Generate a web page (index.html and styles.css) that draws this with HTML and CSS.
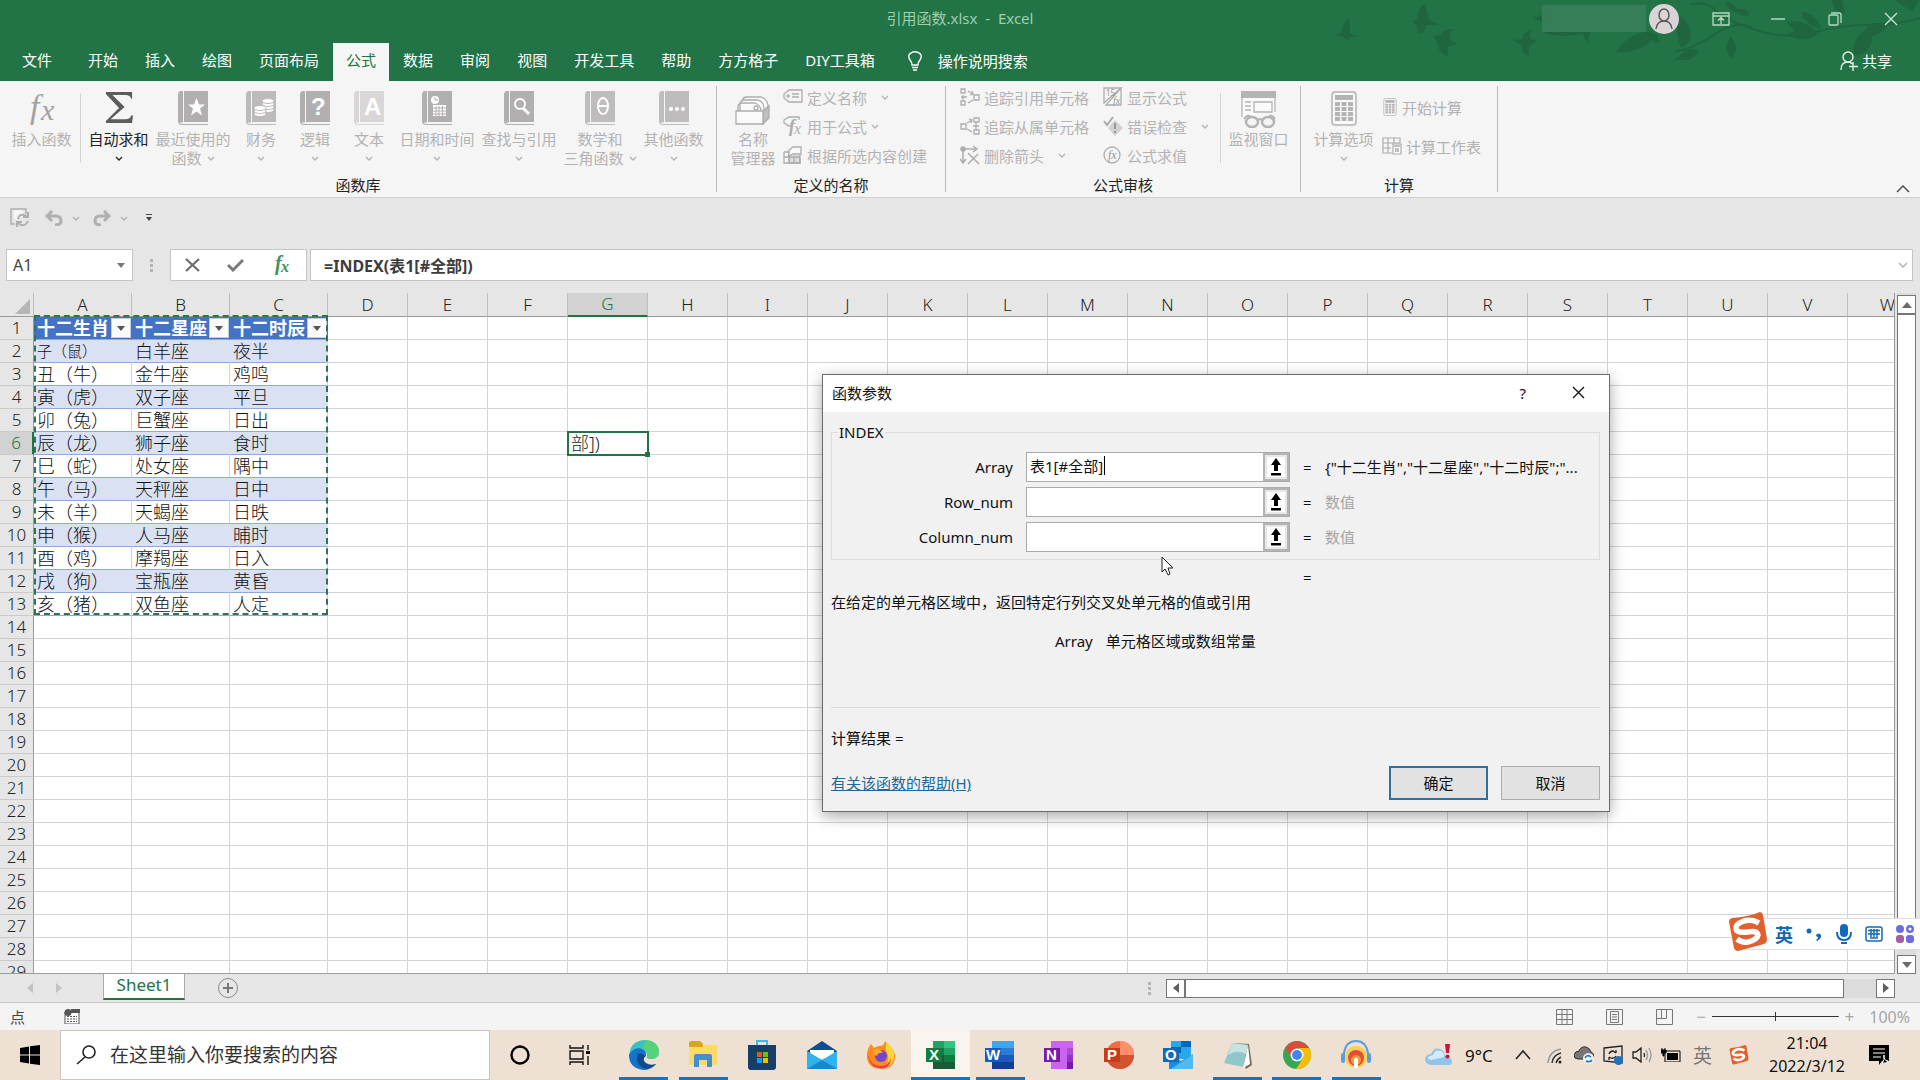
FILE: index.html
```html
<!DOCTYPE html>
<html lang="zh-CN">
<head>
    <meta charset="UTF-8">
    <title>引用函数.xlsx - Excel</title>
    <link rel="stylesheet" href="styles.css">
</head>
<body>
    <!-- shared symbols -->
    <svg class="defs" width="0" height="0">
        <symbol id="book" viewBox="0 0 30 34">
            <path d="M5 0H3Q0 0 0 4V30Q0 34 4 34H30V33H4Q2 33 2 31.500H5Z"/>
            <path d="M6 0H30V31H6Z"/>
        </symbol>
        <symbol id="chev" viewBox="0 0 8 5"><path d="M1 1l3 3 3-3" fill="none" stroke="currentColor" stroke-width="1.300"/></symbol>
        <symbol id="calc" viewBox="0 0 26 35">
            <rect x="1" y="1" width="24" height="33" rx="3" fill="#fafafa" stroke="currentColor" stroke-width="1.500"/>
            <path d="M4 4h18v5H4zM4 11h5v4H4zM10.500 11h5v4h-5zM17 11h5v4h-5zM4 16h5v4H4zM10.500 16h5v4h-5zM17 16h5v4h-5zM4 21h5v4H4zM10.500 21h5v4h-5zM17 21h5v4h-5zM4 26h5v4H4zM10.500 26h5v4h-5zM17 26h5v4h-5z" fill="currentColor"/>
        </symbol>
        <symbol id="sogou" viewBox="0 0 40 40">
            <path d="M4 6Q20 5 32 0Q34 0 35 3L39 27Q39 31 36 32L10 39Q7 39 6 36L1 10Q1 7 4 6Z" fill="#e3602c"/>
            <path d="M31 11Q24 7 16 9Q7 12 8 17Q9 21 19 20Q29 18 30 23Q29 28 20 30Q14 31 9 27" fill="none" stroke="#fff" stroke-width="5.500"/>
        </symbol>
        <symbol id="pick" viewBox="0 0 12 18"><path d="M6 0l5 7H8v6H4V7H1zM1 15h10v2.500H1z"/></symbol>
    </svg>

    <header class="top">
        <svg class="decor" viewBox="0 0 600 60" width="600" height="60">
            <g fill="#1f653e">
                <path d="M30 17q-9 8-8 15l-6 3 8 2q2 3 5 2l1-2 7 0-7-4q-1-9 0-16zM104 4q-8 7-6 15l-6 3 5 3 1 8 6-1 3-7 12 0-11-6q0-8-4-15zM134 29q-10-1-14 6l-6 1 4 8q1 10 10 12l0-9 10-3-8-4q-1-8 4-11zM211 30q-9 2-8 9l-10 1 8 5q0 8 8 11l0-10 8-5-7-2q-1-6 1-9z"/>
                <path d="M213 18l15-5v11zM224 32h46l-2 11-6-9-18 2-18-2zM337 36q-6-7-21-2-14 7-20 18 21 2 35-11zM379 51q-7-4-14 0l-12 10h5q15 1 21-10zM358 15q16 9 12 24-3 7-9 8-6-16-3-32zM330 35l5 8 5 0-4-10zM405 1q11 2 13 12-10-1-13-12zM415 9q15-1 14 6-9 3-14-6zM411 37q10 12 0 21-9-10 0-21zM466 22q20-4 31 11-11 12-30 2l8-4zM481 12q16 1 20 17-14-2-20-17zM552 37q16-7 16-14h-17l-6 7q-15 10-10 26 17-4 17-19zM512 0h10l3 14-10-4zM574 0h26l-8 11z"/>
            </g>
            <path d="M370 5q15-5 25 5t40 20 60 2 55-7 50-7M355 52q20-4 40-18t36-7" fill="none" stroke="#1f653e" stroke-width="2"/>
        </svg>
        <div class="titlebar">
            <div></div>
            <div class="title">引用函数.xlsx&nbsp; -&nbsp; Excel</div>
            <div class="win-right">
                <span class="account"></span>
                <span class="avatar"><svg width="20" height="22" viewBox="0 0 20 22" fill="none" stroke="#5d565a" stroke-width="1.500"><ellipse cx="10" cy="7" rx="5" ry="6"/><path d="M2 21q1-8 8-8t8 8"/></svg></span>
                <button class="win-btn" aria-label="功能区显示选项"><svg width="18" height="14" viewBox="0 0 18 14" fill="none" stroke="#b4d9c2" stroke-width="1.300"><path d="M1 1h16v12H1zM1 4h16M9 12V6M6 8.500l3-3 3 3"/></svg></button>
                <button class="win-btn" aria-label="最小化"><svg width="14" height="14" stroke="#b4d9c2" stroke-width="1.500"><path d="M0 7h14"/></svg></button>
                <button class="win-btn" aria-label="还原"><svg width="14" height="14" viewBox="0 0 14 14" fill="none" stroke="#b4d9c2" stroke-width="1.300"><rect x="1" y="3" width="9" height="10" rx="1"/><path d="M3 1h8q2 0 2 2v8"/></svg></button>
                <button class="win-btn" aria-label="关闭"><svg width="14" height="14" stroke="#cbe8d6" stroke-width="1.300"><path d="M1 1l12 12M13 1L1 13"/></svg></button>
            </div>
        </div>
        <nav class="tabs">
            <button class="tab file">文件</button>
            <button class="tab">开始</button>
            <button class="tab">插入</button>
            <button class="tab">绘图</button>
            <button class="tab">页面布局</button>
            <button class="tab active">公式</button>
            <button class="tab">数据</button>
            <button class="tab">审阅</button>
            <button class="tab">视图</button>
            <button class="tab">开发工具</button>
            <button class="tab">帮助</button>
            <button class="tab">方方格子</button>
            <button class="tab">DIY工具箱</button>
            <button class="tab search"><svg width="16" height="20" viewBox="0 0 16 20" fill="none" stroke="#fff" stroke-width="1.400"><path d="M5 14q0-3-2-5-3-5 1-7 4-2.500 8 0 4 2 1 7-2 2-2 5zM5 16.500h6M6 19h4"/></svg>操作说明搜索</button>
            <button class="tab share"><svg width="18" height="20" viewBox="0 0 18 20" fill="none" stroke="#e6f2ea" stroke-width="1.400"><ellipse cx="8" cy="6" rx="5" ry="5"/><path d="M1 19q0-8 7-8 3 0 4 2M13 11v9M9 15.500h9"/></svg>共享</button>
        </nav>
    </header>

    <section class="ribbon">
        <div class="group">
            <div class="group-body first">
                <button class="big w67"><span class="ico"><svg width="36" height="36" fill="#a3a1a2"><text x="6" y="27" font-family="Liberation Serif" font-style="italic" font-size="34">f</text><text x="17" y="29" font-family="Liberation Serif" font-style="italic" font-size="30">x</text></svg></span>插入函数</button>
                <span class="sep"></span>
                <button class="big w67 on"><span class="ico"><svg width="28" height="33" viewBox="0 0 30 33"><path d="M1 0H29V7H28Q27 3 22 3H8L21 16 6 29H22Q27 29 28 25H30L29 33H1V31L15 17 1 2Z" fill="#5d5b5c"/></svg></span>自动求和<span class="l2"><svg class="arr"><use href="#chev"/></svg></span></button>
                <button class="big w82"><span class="ico"><svg width="30" height="34" fill="#b1afb0"><use href="#book"/><path d="M18.500 7l2.500 6.500h6l-5 4 2 7-5.500-4-5.500 4 2-7-5-4h6z" fill="#fff"/></svg></span>最近使用的<span class="l2">函数 <svg class="arr"><use href="#chev"/></svg></span></button>
                <button class="big w54"><span class="ico"><svg width="30" height="34" fill="#bcbabb"><use href="#book"/><g fill="#fff" stroke="#bcbabb"><ellipse cx="22" cy="19" rx="6" ry="2.500"/><ellipse cx="22" cy="16" rx="6" ry="2.500"/><ellipse cx="22" cy="13" rx="6" ry="2.500"/><ellipse cx="22" cy="10" rx="6" ry="2.500"/><ellipse cx="14" cy="23" rx="6" ry="2.500"/><ellipse cx="14" cy="20" rx="6" ry="2.500"/><ellipse cx="14" cy="17" rx="6" ry="2.500"/></g></svg></span>财务<span class="l2"><svg class="arr"><use href="#chev"/></svg></span></button>
                <button class="big w54"><span class="ico"><svg width="30" height="34" fill="#b1afb0"><use href="#book"/><text x="11" y="24" class="glyph">?</text></svg></span>逻辑<span class="l2"><svg class="arr"><use href="#chev"/></svg></span></button>
                <button class="big w54"><span class="ico"><svg width="30" height="34" fill="#d8d6d7"><use href="#book"/><text x="10" y="24" class="glyph">A</text></svg></span>文本<span class="l2"><svg class="arr"><use href="#chev"/></svg></span></button>
                <button class="big w82"><span class="ico"><svg width="30" height="34" fill="#b1afb0"><use href="#book"/><circle cx="13" cy="9" r="4" fill="#fff"/><path d="M13 6v3h3" fill="none" stroke="#aaa"/><path d="M11 14h13v11H11z" fill="#fff"/><path d="M11 17h13M11 20h13M11 23h13M14 15v10M17 15v10M20.500 15v10" stroke="#b1afb0"/></svg></span>日期和时间<span class="l2"><svg class="arr"><use href="#chev"/></svg></span></button>
                <button class="big w82"><span class="ico"><svg width="30" height="34" fill="#b1afb0"><use href="#book"/><circle cx="16" cy="13" r="5" fill="none" stroke="#fff" stroke-width="2"/><path d="M19 17l6 6" stroke="#fff" stroke-width="3"/></svg></span>查找与引用<span class="l2"><svg class="arr"><use href="#chev"/></svg></span></button>
                <button class="big w80"><span class="ico"><svg width="30" height="34" fill="#bebcbd"><use href="#book"/><ellipse cx="18" cy="15" rx="5" ry="8" fill="none" stroke="#fff" stroke-width="2"/><path d="M13 15h10" stroke="#fff" stroke-width="2"/></svg></span>数学和<span class="l2">三角函数 <svg class="arr"><use href="#chev"/></svg></span></button>
                <button class="big w67"><span class="ico"><svg width="30" height="34" fill="#bebcbd"><use href="#book"/><g fill="#fff"><circle cx="12" cy="18" r="2"/><circle cx="18" cy="18" r="2"/><circle cx="24" cy="18" r="2"/></g></svg></span>其他函数<span class="l2"><svg class="arr"><use href="#chev"/></svg></span></button>
            </div>
            <div class="group-label">函数库</div>
        </div>

        <div class="group">
            <div class="group-body names">
                <button class="big w54"><span class="ico"><svg width="36" height="30" viewBox="0 0 36 30" fill="#fafafa" stroke="#aeacad" stroke-width="1.300"><path d="M7 15V5q1-4 5-4h14q6 2 7 8v8H7z"/><path d="M5 15V7q1-3 5-3h13q6 2 6 8v5M3 15V10q1-3 5-3h12q5 2 6 7v3"/><circle cx="21" cy="12" r="2"/><path d="M28 15l6-5v12l-6 6z" fill="#c0bebf"/><path d="M1 15h27v13H1z"/></svg></span>名称<span class="l2">管理器</span></button>
                <div class="stack">
                    <button class="small"><svg width="20" height="16" viewBox="0 0 20 16" fill="none" stroke="#aeacad" stroke-width="1.300"><path d="M6 1h13v12H6L1 9V5z"/><circle cx="5" cy="7" r="1"/><path d="M9 5h7M9 8h7"/></svg>定义名称<svg class="arr far"><use href="#chev"/></svg></button>
                    <button class="small"><svg width="20" height="20" viewBox="0 0 20 20" fill="#aeacad"><path d="M8 10H6L1 7V4l5-3h10v3" fill="none" stroke="#aeacad" stroke-width="1.300"/><text x="6" y="16" font-family="Liberation Serif" font-style="italic" font-size="18" font-weight="bold">f</text><text x="11" y="18" font-family="Liberation Serif" font-style="italic" font-size="16">x</text></svg>用于公式<svg class="arr"><use href="#chev"/></svg></button>
                    <button class="small"><svg width="20" height="18" viewBox="0 0 20 18" fill="none" stroke="#aeacad" stroke-width="1.300"><path d="M1 6h5v11h11V9" fill="#ddd"/><path d="M1 6v11h16v-5M1 11h16M6 6v11M11 11v6"/><path d="M10 1h8v7h-8l-4 2V4z" fill="#fafafa"/></svg>根据所选内容创建</button>
                </div>
            </div>
            <div class="group-label">定义的名称</div>
        </div>

        <div class="group">
            <div class="group-body audit">
                <div class="stack trace">
                    <button class="small"><svg width="20" height="18" viewBox="0 0 20 18" fill="none" stroke="#aeacad" stroke-width="1.300"><path d="M1 1h4v4H1zM1 13h4v4H1zM14 7h5v5h-5zM8 3l5 3M10 7l3-1-1-3M8 15l5-3M3 7v5M1 9h6"/></svg>追踪引用单元格</button>
                    <button class="small"><svg width="20" height="18" viewBox="0 0 20 18" fill="none" stroke="#aeacad" stroke-width="1.300"><path d="M14 1h5v4h-5zM14 13h5v4h-5zM1 7h5v5H1zM7 6l5-3M9 2l3 1-1 3M7 12l5 3M16 6v6M13 9h6"/></svg>追踪从属单元格</button>
                    <button class="small"><svg width="20" height="20" viewBox="0 0 20 20" fill="none" stroke="#aeacad" stroke-width="1.500"><circle cx="3" cy="4" r="2" fill="#aeacad"/><path d="M3 4h13M13 1l4 3-4 3M3 4v13M0 14l3 4 3-4M8 8l11 11M18 9L8 19"/></svg>删除箭头<svg class="arr far"><use href="#chev"/></svg></button>
                </div>
                <div class="stack check">
                    <button class="small"><svg width="20" height="20" viewBox="0 0 20 20" fill="none" stroke="#aeacad" stroke-width="1.300"><path d="M1 1h17L1 16zM18 1v17H3z"/><text x="3" y="9" font-family="Noto Sans" font-size="8" fill="#999" stroke="none">15</text><text x="10" y="17" font-family="Liberation Serif" font-style="italic" font-size="10" fill="#999" stroke="none">fx</text></svg>显示公式</button>
                    <button class="small"><svg width="20" height="20" viewBox="0 0 20 20"><path d="M12 4l8 8-8 8-7-8z" fill="#d3d1d2"/><path d="M12 7v6M12 15v2" stroke="#999" stroke-width="2"/><path d="M1 5l3 4 6-8" fill="none" stroke="#aaa8a9" stroke-width="2"/></svg>错误检查<svg class="arr far"><use href="#chev"/></svg></button>
                    <button class="small"><svg width="20" height="18" viewBox="0 0 20 18"><ellipse cx="9" cy="9" rx="8" ry="8" fill="none" stroke="#aeacad" stroke-width="1.300"/><text x="5" y="13" font-family="Liberation Serif" font-style="italic" font-size="12" fill="#999">fx</text></svg>公式求值</button>
                </div>
                <span class="sep"></span>
                <button class="big w67"><span class="ico"><svg width="38" height="37" viewBox="0 0 38 37" fill="none" stroke="#b5b3b4" stroke-width="1.300"><path d="M2 26V1h33v20" fill="#fafafa"/><path d="M1 0h35v7H1z" fill="#b5b3b4" stroke="none"/><path d="M5 11h6M5 15h6M5 19h6M14 11h18v10H14z"/><path d="M4 28q3-5 7-2M35 28q-3-5-6-2" stroke-width="2"/><ellipse cx="12" cy="31" rx="6" ry="5" stroke-width="2.500"/><ellipse cx="28" cy="31" rx="6" ry="5" stroke-width="2.500"/><path d="M18 29q2-2 4 0" stroke-width="2"/></svg></span>监视窗口</button>
            </div>
            <div class="group-label">公式审核</div>
        </div>

        <div class="group">
            <div class="group-body calculate">
                <button class="big w67"><span class="ico"><svg width="26" height="35"><use href="#calc"/></svg></span>计算选项<span class="l2"><svg class="arr"><use href="#chev"/></svg></span></button>
                <div class="stack loose">
                    <button class="small"><svg width="16" height="18"><use href="#calc"/></svg>开始计算</button>
                    <button class="small"><svg width="20" height="18" viewBox="0 0 20 18" fill="none" stroke="#aeacad" stroke-width="1.200"><path d="M10 16H1V1h17v5M1 6h17M1 11h8M6 1v15M12 1v5"/><path d="M11 7h8v10h-8z" fill="#fafafa"/><path d="M12 9h6M13 12h4M13 14h4" stroke-width="1.500"/></svg>计算工作表</button>
                </div>
            </div>
            <div class="group-label">计算</div>
        </div>
        <button class="collapse" aria-label="折叠功能区"><svg width="14" height="8" fill="none" stroke="#444" stroke-width="1.400"><path d="M1 7l6-6 6 6"/></svg></button>
    </section>

    <div class="qat">
        <button aria-label="保存"><svg width="20" height="20" viewBox="0 0 20 20" fill="none" stroke="#b0b0b0" stroke-width="1.500"><path d="M5 16H1V1h15v5"/><path d="M4 2h9v6l-6 3H4z" fill="#f6f6f6" stroke="none"/><path d="M8 11q1-5 6-4l4 2M18 4v5h-5M18 13q-2 5-7 4l-3-2M7 19v-5h5" stroke-width="2"/></svg></button>
        <button class="undo" aria-label="撤消"><svg width="18" height="16" viewBox="0 0 18 16" fill="none" stroke="#b0b0b0" stroke-width="3"><path d="M7 1L2 6l5 5M2 6h9q5 0 5 5 0 4-6 4"/></svg></button>
        <svg class="arr"><use href="#chev"/></svg>
        <button class="redo" aria-label="恢复"><svg width="18" height="16" viewBox="0 0 18 16" fill="none" stroke="#b0b0b0" stroke-width="3"><path d="M11 1l5 5-5 5M16 6H7q-5 0-5 5 0 4 6 4"/></svg></button>
        <svg class="arr"><use href="#chev"/></svg>
        <button class="custom" aria-label="自定义快速访问工具栏"><svg width="6" height="8" fill="#444"><path d="M0 0h6v1H0zM0 3h6L3 7z"/></svg></button>
    </div>

    <div class="formula-row">
        <div class="name-box"><input type="text" value="A1" aria-label="名称框"><button aria-label="名称列表"><svg width="8" height="5" fill="#777"><path d="M0 0h8L4 5z"/></svg></button></div>
        <span class="dots"></span>
        <div class="fx-box">
            <button aria-label="取消"><svg width="15" height="14" stroke="#6b6b6b" stroke-width="2.200"><path d="M1 1l13 12M14 1L1 13"/></svg></button>
            <button aria-label="输入"><svg width="17" height="14" fill="none" stroke="#7b7b7b" stroke-width="3"><path d="M1 7l5 5L16 2"/></svg></button>
            <button aria-label="插入函数"><svg width="20" height="22" fill="#3f9160"><text x="3" y="16" font-family="Liberation Serif" font-style="italic" font-weight="bold" font-size="20">f</text><text x="9" y="18" font-family="Liberation Serif" font-style="italic" font-weight="bold" font-size="16">x</text></svg></button>
        </div>
        <div class="formula-box"><input type="text" value="=INDEX(表1[#全部])" aria-label="编辑栏"><svg width="10" height="6" fill="none" stroke="#b5b5b5" stroke-width="1.500"><path d="M1 1l4 4 4-4"/></svg></div>
    </div>

    <main class="workspace">
        <div class="sheet">
            <table id="grid"></table>
            <div class="ants"></div>
        </div>
        <div class="vscroll">
            <button aria-label="向上"><svg width="10" height="6" fill="#6b6b6b"><path d="M0 6h10L5 0z"/></svg></button>
            <div class="vthumb"></div>
            <button aria-label="向下"><svg width="10" height="6" fill="#6b6b6b"><path d="M0 0h10L5 6z"/></svg></button>
        </div>
    </main>

    <div class="sheetbar">
        <button class="nav" aria-label="上一张"><svg width="6" height="10" fill="#c2c2c2"><path d="M6 0v10L0 5z"/></svg></button>
        <button class="nav" aria-label="下一张"><svg width="6" height="10" fill="#c2c2c2"><path d="M0 0v10l6-5z"/></svg></button>
        <button class="sheet-tab">Sheet1</button>
        <button class="add" aria-label="新工作表"><svg width="22" height="22" fill="none" stroke="#8a8a8a"><circle cx="11" cy="11" r="9.500"/><path d="M6 11h10M11 6v10" stroke="#777" stroke-width="2"/></svg></button>
        <span class="dots"></span>
        <div class="hscroll">
            <button aria-label="向左"><svg width="6" height="10" fill="#5f5f5f"><path d="M6 0v10L0 5z"/></svg></button>
            <div class="hthumb"></div>
            <button aria-label="向右"><svg width="6" height="10" fill="#5f5f5f"><path d="M0 0v10l6-5z"/></svg></button>
        </div>
    </div>

    <footer class="status">
        <span class="mode">点</span>
        <svg width="16" height="15" viewBox="0 0 16 15"><path d="M1 3h14v12H1z" fill="#fff" stroke="#555"/><path d="M7 0h9v4H7z" fill="#555"/><circle cx="4" cy="3.500" r="3.500" fill="#555"/><path d="M3 7.500h10M3 10h10M3 12.500h10" stroke="#555" stroke-dasharray="2 1"/></svg>
        <div class="views">
            <button aria-label="普通"><svg width="17" height="16" fill="none" stroke="#777"><path d="M.5.5h16v15H.5zM.5 5.500h16M.5 10.500h16M6 .5v15M11 .5v15"/></svg></button>
            <button aria-label="页面布局"><svg width="17" height="16" fill="none" stroke="#777"><path d="M.5.5h16v15H.5zM4.500 2.500h8v11h-8zM6 5.500h5M6 8h5M6 10.500h5"/></svg></button>
            <button aria-label="分页预览"><svg width="17" height="16" fill="none" stroke="#777"><path d="M.5.5h16v15H.5zM.5 9.500h10v-9M5.500.5v9"/></svg></button>
        </div>
        <div class="zoom">
            <button aria-label="缩小">−</button>
            <input type="range" min="10" max="190" value="100" aria-label="显示比例">
            <button aria-label="放大">+</button>
        </div>
        <span class="percent">100%</span>
    </footer>

    <div class="taskbar">
        <button class="start" aria-label="开始"><svg width="20" height="20" viewBox="0 0 20 20"><path d="M0 3l9-1.500V9.500H0zM10 1.300L20 0v9.500H10zM0 10.500h9v8L0 17zM10 10.500h10V20l-10-1.300z"/></svg></button>
        <label class="search-box"><svg width="20" height="20" fill="none" stroke="#222" stroke-width="1.600"><circle cx="13" cy="7" r="6"/><path d="M9 12L1 19"/></svg><input type="text" placeholder="在这里输入你要搜索的内容"></label>
        <button class="sys" aria-label="Cortana"><svg width="20" height="20" fill="none" stroke="#000" stroke-width="2.400"><circle cx="10" cy="10" r="8.500"/></svg></button>
        <button class="sys" aria-label="任务视图"><svg width="22" height="20" viewBox="0 0 22 20" fill="none" stroke="#111" stroke-width="1.400"><path d="M1 0v3h13V0M1 6h13v8H1zM1 20v-3h13v3M19 0v5M19 11v9"/><path d="M17 6h4v3h-4z" fill="#111" stroke="none"/></svg></button>
        <div class="apps">
            <button class="app run" aria-label="Edge"><svg width="32" height="30" viewBox="0 0 32 30"><path d="M1 16Q2 1 16 0q13 0 15 11 0 8-8 8-5 0-4-3 1-5-5-6-8-1-13 6z" fill="#36c2c0"/><path d="M18 0q13 2 13 12 0 7-8 7-5 0-4-3 2-6-5-7z" fill="#54d37a"/><path d="M1 15q5-9 13-6 5 2 4 7-5 3-1 8 5 3 11 0-5 6-13 6Q1 28 1 15z" fill="#1572c9"/><path d="M10 14q-4 11 8 15 7-1 10-5-6 2-10-1t-1-7q-4-4-7-2z" fill="#114a8b"/></svg></button>
            <button class="app run" aria-label="文件资源管理器"><svg width="28" height="28" viewBox="0 0 28 28"><path d="M0 2q0-2 2-2h9l3 3v4H0z" fill="#d9a321"/><path d="M0 6h13l2-2h13v20H0z" fill="#fbd96b"/><path d="M5 26V15q0-2 2-2h14q2 0 2 2v11h-5v-7h-8v7z" fill="#3f92cf"/></svg></button>
            <button class="app" aria-label="商店"><svg width="30" height="30" viewBox="0 0 30 30"><path d="M10 6V1h10v5" fill="none" stroke="#41b9e8" stroke-width="2"/><path d="M1 5h28v22q0 3-3 3H4q-3 0-3-3z" fill="#173e68"/><path d="M10 12h5v5h-5z" fill="#f25022"/><path d="M16 12h5v5h-5z" fill="#7fba00"/><path d="M10 18h5v5h-5z" fill="#00a4ef"/><path d="M16 18h5v5h-5z" fill="#ffb900"/></svg></button>
            <button class="app" aria-label="邮件"><svg width="30" height="28" viewBox="0 0 30 28"><path d="M0 10L15 0l15 10v6H0z" fill="#114e8c"/><path d="M3 9h24v8H3z" fill="#fff"/><path d="M0 10l15 9 15-9v18H0z" fill="#2fb3ec"/><path d="M0 28l15-9 15 9z" fill="#1688d0"/></svg></button>
            <button class="app" aria-label="Firefox"><svg width="28" height="28" viewBox="0 0 28 28"><path d="M18 0q3 4 6 6 5 6 4 12-2 10-14 10T0 17Q-1 9 4 3l3 4q3-2 6-2 4 0 5-5z" fill="#ff8a1e"/><path d="M19 1q9 6 8 15-1 9-9 10 6-9 1-16z" fill="#ffd43a"/><path d="M1 12q2 14 14 13 7-1 9-8 0 9-8 10Q2 28 1 12z" fill="#f0344e"/><circle cx="14" cy="15" r="6" fill="#7544cf"/><path d="M6 9q6-3 10 3-5-1-6 3-4-2-4-6z" fill="#ffab2e"/></svg></button>
            <button class="app run active" aria-label="Excel"><svg width="30" height="28" viewBox="0 0 30 28"><path d="M7 0h22v28H7z" fill="#21a366"/><path d="M18 0h11v7H18z" fill="#33c481"/><path d="M7 7h11v7H7zM18 14h11v7H18z" fill="#107c41"/><path d="M7 14h11v7H7zM7 21h22v7H7z" fill="#185c37"/><path d="M0 7h16v14H0z" fill="#107c41"/><text x="3" y="19" class="logo">X</text></svg></button>
            <button class="app run" aria-label="Word"><svg width="30" height="28" viewBox="0 0 30 28"><path d="M7 0h22v7H7z" fill="#41a5ee"/><path d="M7 7h22v7H7z" fill="#2b7cd3"/><path d="M7 14h22v7H7z" fill="#185abd"/><path d="M7 21h22v7H7z" fill="#103f91"/><path d="M0 7h16v14H0z" fill="#185abd"/><text x="1" y="19" class="logo">W</text></svg></button>
            <button class="app" aria-label="OneNote"><svg width="30" height="28" viewBox="0 0 30 28"><path d="M7 0h22v28H7z" fill="#ca64ea"/><path d="M23 7h6v7h-6z" fill="#ae4bd5"/><path d="M23 14h6v7h-6z" fill="#9332bf"/><path d="M23 21h6v7h-6z" fill="#7719aa"/><path d="M0 7h16v14H0z" fill="#7719aa"/><text x="2" y="19" class="logo">N</text></svg></button>
            <button class="app" aria-label="PowerPoint"><svg width="30" height="28" viewBox="0 0 30 28"><circle cx="16" cy="14" r="14" fill="#ed6c47"/><path d="M16 0a14 14 0 0 1 14 14H16z" fill="#ff8f6b"/><path d="M2 14h28a14 14 0 0 1-28 0z" fill="#d35230"/><path d="M0 7h16v14H0z" fill="#c43e1c"/><text x="3" y="19" class="logo">P</text></svg></button>
            <button class="app" aria-label="Outlook"><svg width="30" height="28" viewBox="0 0 30 28"><path d="M8 0h20v18H8z" fill="#28a8ea"/><path d="M18 0h10v6H18zM8 6h10v6H8z" fill="#0364b8"/><path d="M6 13l12 7 12-7v15H6z" fill="#1490df"/><path d="M30 13L8 28h22z" fill="#50b9ee"/><path d="M0 7h16v14H0z" fill="#0f6cbd"/><text x="2" y="19" class="logo">O</text></svg></button>
            <button class="app run" aria-label="记事本"><svg width="28" height="28" viewBox="0 0 28 28"><path d="M8 2l17 1 3 21-6 4z" fill="#776d55"/><path d="M24 4l2 19-7 4z" fill="#fff"/><path d="M8 2l16 2-5 22L0 22z" fill="#8fc8cb"/><path d="M8 2l16 2-2 9Q13 8 4 14z" fill="#c5e3e1"/></svg></button>
            <button class="app run" aria-label="Chrome"><svg width="28" height="28" viewBox="0 0 28 28"><circle cx="14" cy="14" r="14" fill="#34a853"/><path d="M26 7a14 14 0 0 1-13 21l7-11-4-10z" fill="#fbbc05"/><path d="M2 7q12-14 24 0H14l-6 8z" fill="#dd4a3d"/><circle cx="14" cy="14" r="6.500" fill="#fff"/><circle cx="14" cy="14" r="5" fill="#4285f4"/></svg></button>
            <button class="app run" aria-label="音乐"><svg width="30" height="30" viewBox="0 0 30 30"><path d="M3 17V13Q5 1 15 1t12 12v4" fill="none" stroke="#5b9de0" stroke-width="2"/><rect x="0" y="13" width="4" height="10" rx="2" fill="#5b9de0"/><rect x="26" y="13" width="4" height="10" rx="2" fill="#5b9de0"/><circle cx="15" cy="17" r="11" fill="#fbd04e"/><circle cx="15" cy="18" r="8" fill="#e44b3a"/><circle cx="15" cy="20" r="5" fill="#f59a3c"/><path d="M13 19q2-3 4 0v9h-4z" fill="#fff"/></svg></button>
        </div>
        <div class="tray">
            <svg width="28" height="22" viewBox="0 0 28 22"><path d="M6 21q-6-1-6-6 1-5 6-5 3-7 9-5 5 2 5 7 7 1 7 6 0 3-3 3z" fill="#8fc5ea"/><path d="M6 16q-4-1-3-3l5-2q2-6 8-4 4 2 3 6z" fill="#d5eafa"/><path d="M20 0h5l-1 9h-3z" fill="#c4163a"/><circle cx="22.500" cy="12.500" r="2" fill="#c4163a"/></svg>
            <span class="temp">9°C</span>
            <svg class="up" width="16" height="10" fill="none" stroke="#222" stroke-width="1.600"><path d="M1 9l7-8 7 8"/></svg>
            <svg class="t" width="18" height="18" fill="none" stroke="#333" stroke-width="1.500"><path d="M3 17Q4 5 16 3" stroke="#999"/><path d="M7 17q1-8 9-10M11 17q1-4 5-6"/><circle cx="15" cy="16" r="1.500" fill="#222" stroke="none"/></svg>
            <svg class="t" width="20" height="18" viewBox="0 0 20 18"><path d="M4 13q-4 0-4-4 1-4 5-4 2-5 7-4 4 1 5 5 3 1 3 5l-3 2z" fill="#777" stroke="#333"/><circle cx="14.500" cy="12.500" r="5.500" fill="#eaf3fa"/><path d="M11 12q2-4 6-1M18 14q-2 3-6 1" fill="none" stroke="#2d6da3" stroke-width="1.500"/></svg>
            <svg class="t" width="20" height="20" viewBox="0 0 20 20" fill="none" stroke="#222" stroke-width="1.300"><path d="M1 3l18-2v17L1 16z"/><path d="M6 9q1-3 4-3l3 2M13 5v3M13 11q-2 3-5 2l-2-1M6 15v-3"/><circle cx="15.500" cy="15.500" r="4.500" fill="#2272b9" stroke="none"/></svg>
            <svg class="t" width="20" height="16" viewBox="0 0 20 16" fill="none" stroke="#222" stroke-width="1.300"><path d="M1 5h3l5-4v14l-5-4H1zM12 6q1 2 0 4"/><path d="M14 3q3 5 0 10M17 1q4 7 0 14" stroke="#999"/></svg>
            <svg class="t" width="20" height="14" viewBox="0 0 20 14"><path d="M4 3h15v11H4z" fill="none" stroke="#000"/><path d="M6 5h11v7H6z"/><path d="M0 2h5v3H3v3H2V5H0zM1 0v3M4 0v3" stroke="#000"/></svg>
            <span class="ime">英</span>
            <svg width="20" height="20"><use href="#sogou"/></svg>
            <div class="clock">21:04<br>2022/3/12</div>
            <svg width="20" height="20" viewBox="0 0 20 20"><path d="M0 0h20v16h-7l-3 4v-4H0z"/><path d="M4 4h12M4 8h12M4 12h8" stroke="#fff"/><path d="M15 10q-1 5 4 6-2 3-6 2 3-3 2-8z" stroke="#fff"/></svg>
        </div>
    </div>

    <!-- function arguments dialog -->
    <div class="dialog" role="dialog" aria-label="函数参数">
        <div class="dialog-title">函数参数
            <button class="help" aria-label="帮助">?</button>
            <button aria-label="关闭"><svg width="13" height="13" stroke="#111" stroke-width="1.300"><path d="M1 1l11 11M12 1L1 12"/></svg></button>
        </div>
        <div class="dialog-body">
            <fieldset>
                <legend>INDEX</legend>
                <div class="arg">
                    <label for="arg-array">Array</label>
                    <div class="field"><input type="text" id="arg-array" value="表1[#全部]"><i class="caret"></i><button aria-label="选择区域"><svg width="12" height="18"><use href="#pick"/></svg></button></div>
                    <span>=</span><span>{"十二生肖","十二星座","十二时辰";"...</span>
                </div>
                <div class="arg">
                    <label for="arg-row">Row_num</label>
                    <div class="field"><input type="text" id="arg-row"><button aria-label="选择区域"><svg width="12" height="18"><use href="#pick"/></svg></button></div>
                    <span>=</span><span class="hint">数值</span>
                </div>
                <div class="arg">
                    <label for="arg-col">Column_num</label>
                    <div class="field"><input type="text" id="arg-col"><button aria-label="选择区域"><svg width="12" height="18"><use href="#pick"/></svg></button></div>
                    <span>=</span><span class="hint">数值</span>
                </div>
            </fieldset>
            <div class="total">=</div>
            <p class="desc">在给定的单元格区域中，返回特定行列交叉处单元格的值或引用</p>
            <p class="arg-desc"><span>Array</span><span>单元格区域或数组常量</span></p>
            <p class="result">计算结果 =</p>
            <div class="dialog-foot">
                <a href="#">有关该函数的帮助(H)</a>
                <button class="ok">确定</button>
                <button>取消</button>
            </div>
        </div>
    </div>

    <svg class="cursor" width="13" height="20" viewBox="0 0 13 20"><path d="M1 1v15l3-3 3 6 2-1-2-6h5z" fill="#fff" stroke="#222"/></svg>

    <div class="ime-bar">
        <svg class="ime-logo" width="40" height="40"><use href="#sogou"/></svg>
        <span>英</span>
        <svg width="16" height="14" fill="#1369b8"><circle cx="3" cy="4" r="2.500"/><path d="M10 8q3-3 5 0 1 3-4 6l-1-1q2-1 2-3-2 0-2-2z"/></svg>
        <svg width="16" height="20" viewBox="0 0 16 20" fill="#1369b8"><rect x="4" y="0" width="8" height="13" rx="4"/><path d="M1 8q0 8 7 8t7-8" fill="none" stroke="#1369b8" stroke-width="2"/><path d="M5 18h6v2H5z"/></svg>
        <svg width="18" height="16" fill="none" stroke="#1369b8" stroke-width="1.500"><rect x="1" y="1" width="16" height="14" rx="2"/><path d="M3 4.500h12M3 8h12M6 3v8M9 3v8M12 3v8M5 12h8"/></svg>
        <svg width="18" height="18"><g fill="#6d6be0"><rect width="8" height="8" rx="4"/><rect x="10" width="8" height="8" rx="4"/><rect x="10" y="10" width="8" height="8" rx="3"/></g><rect y="10" width="8" height="8" rx="3" fill="#a3609f"/><circle cx="14" cy="4" r="1.500" fill="#fff"/></svg>
    </div>

    <script src="grid.js"></script>
</body>
</html>
```
FILE: styles.css
```css
* {
    box-sizing: border-box;
}
body {
    margin: 0;
    height: 100vh;
    display: flex;
    flex-direction: column;
    overflow: hidden;
    background: #e6e6e6;
    color: #222;
    font-family: "Noto Sans", "Noto Sans CJK SC", sans-serif;
    font-size: 15px;
}
button, input {
    font: inherit;
    color: inherit;
    margin: 0;
    padding: 0;
    border: none;
    background: none;
    outline: none;
}
svg {
    display: block;
    flex: none;
}
.defs {
    position: absolute;
}
p {
    margin: 0;
}

/* title bar and tabs */
.top {
    position: relative;
    flex: none;
    background: #227447;
}
.decor {
    position: absolute;
    right: 0;
    top: 0;
}
.titlebar {
    position: relative;
    height: 43px;
    display: grid;
    grid-template-columns: 1fr auto 1fr;
}
.title {
    line-height: 36px;
    color: #9dcfb0;
}
.win-right {
    display: flex;
    justify-content: flex-end;
    align-items: center;
    height: 37px;
}
.account {
    width: 104px;
    height: 27px;
    margin-right: 3px;
    background: #37805a;
    opacity: 0.9;
}
.avatar {
    width: 30px;
    height: 30px;
    margin-right: 13px;
    border-radius: 50%;
    background: #d9d5d6;
    display: flex;
    align-items: center;
    justify-content: center;
}
.win-btn {
    width: 57px;
    display: flex;
    justify-content: center;
}
.win-btn:last-child {
    padding-right: 2px;
}
.tabs {
    position: relative;
    display: flex;
    gap: 1px;
    height: 38px;
    padding-left: 9px;
}
.tab {
    padding: 0 13px 4px;
    color: #fff;
    line-height: 20px;
}
.tab.file {
    margin-right: 9px;
}
.tab.active {
    background: #f5f5f5;
    color: #227447;
}
.tab.search, .tab.share {
    display: flex;
    align-items: center;
    gap: 15px;
    padding: 0 13px 2px 18px;
}
.tab.share {
    margin-left: auto;
    gap: 4px;
    padding-right: 28px;
}

/* ribbon */
.ribbon {
    position: relative;
    flex: none;
    display: flex;
    height: 117px;
    padding: 5px 0;
    background: #f5f5f5;
    border-bottom: 1px solid #d0d0d0;
    color: #b4b2b3;
}
.group {
    display: flex;
    flex-direction: column;
    border-right: 1px solid #b9b9b9;
}
.group-body {
    flex: 1;
    display: flex;
}
.group-body.first {
    padding: 0 9px 0 8px;
}
.group-body.names {
    gap: 3px;
    padding: 0 18px 0 9px;
}
.group-body.audit {
    padding: 0 8px 0 14px;
}
.group-body.calculate {
    padding: 0 16px 0 9px;
}
.group-label {
    text-align: center;
    line-height: 14px;
    color: #222;
}
.big {
    display: flex;
    flex-direction: column;
    align-items: center;
    height: 84px;
    padding-top: 5px;
    line-height: 19px;
    white-space: nowrap;
}
.big.on {
    color: #222;
}
.ico {
    height: 39px;
}
.names .ico {
    padding-top: 5px;
}
.l2 {
    display: flex;
    align-items: center;
    gap: 5px;
    height: 19px;
}
.w54 { width: 54px; }
.w67 { width: 67px; }
.w80 { width: 80px; }
.w82 { width: 82px; }
.glyph {
    font: bold 24px "Liberation Sans", sans-serif;
    fill: #fff;
}
.arr {
    width: 8px;
    height: 5px;
}
.sep {
    width: 1px;
    height: 70px;
    margin: 7px 4px 0 5px;
    background: #d4d4d4;
}
.stack {
    display: flex;
    flex-direction: column;
    gap: 5px;
}
.stack.trace {
    width: 143px;
}
.stack.check {
    width: 112px;
}
.stack.loose {
    gap: 15px;
    padding: 10px 0 0 5px;
}
.small {
    display: flex;
    align-items: center;
    gap: 4px;
    height: 24px;
    padding-bottom: 2px;
    white-space: nowrap;
}
.small .far {
    margin-left: 10px;
}
.collapse {
    position: absolute;
    right: 10px;
    bottom: 4px;
}

/* quick access */
.qat {
    flex: none;
    display: flex;
    align-items: center;
    height: 51px;
    padding: 0 0 11px 10px;
    color: #b0b0b0;
}
.qat .undo {
    margin: 0 9px 0 15px;
}
.qat .redo {
    margin: 0 9px 0 13px;
}
.qat .custom {
    margin-left: 18px;
}

/* formula bar */
.formula-row {
    flex: none;
    display: flex;
    align-items: stretch;
    height: 44px;
    padding: 0 7px 12px 6px;
}
.name-box, .fx-box, .formula-box {
    display: flex;
    align-items: center;
    background: #fff;
    border: 1px solid #c6c6c6;
}
.name-box {
    width: 127px;
    padding: 0 7px 0 6px;
    color: #444;
}
.name-box input {
    flex: 1;
    min-width: 0;
    font-size: 16px;
}
.dots {
    width: 3px;
    height: 13px;
    margin: auto 17px;
    background: repeating-linear-gradient(#b4b4b4 0 3px, transparent 3px 5px);
}
.fx-box {
    width: 137px;
    margin-right: 3px;
    justify-content: space-around;
}
.formula-box {
    flex: 1;
    padding: 0 4px 0 13px;
}
.formula-box input {
    flex: 1;
    font-size: 16px;
    font-weight: bold;
    color: #3c3c3c;
}

/* worksheet */
.workspace {
    flex: 1;
    min-height: 0;
    display: flex;
    padding-right: 4px;
}
.sheet {
    position: relative;
    flex: 1;
    overflow: hidden;
    border-right: 1px solid #9a9a9a;
    border-bottom: 1px solid #9aa09a;
}
#grid {
    table-layout: fixed;
    width: 1928px;
    border-spacing: 0;
}
#grid th, #grid td {
    height: 23px;
    padding: 0;
    font-weight: 300;
    font-size: 17px;
    line-height: 22px;
    white-space: nowrap;
}
#grid th {
    background: #e6e6e6;
    color: #222;
    border-right: 1px solid #bdbdbd;
}
#grid thead th {
    border-bottom: 1px solid #9a9a9a;
}
#grid tbody th {
    border-right-color: #9a9a9a;
    border-bottom: 1px solid #cacaca;
}
#grid thead th.sel {
    background: #d2d2d2;
    color: #227447;
    border-bottom: 2px solid #227447;
}
#grid tbody th.sel {
    background: #d2d2d2;
    color: #227447;
    border-right: 2px solid #227447;
}
#grid td {
    background: #fff;
    border-right: 1px solid #d4d4d4;
    border-bottom: 1px solid #d4d4d4;
}
#grid td.data {
    padding-left: 3px;
    font-size: 18px;
    color: #111;
    border-bottom-color: #8ea9db;
}
#grid tr.band td.data {
    background: #d9e1f2;
    border-right-color: #d9e1f2;
}
#grid td.data.typing {
    font-size: 15px;
    vertical-align: top;
}
#grid td.head {
    background: #4472c4;
    border-right-color: #4472c4;
    color: #fff;
    font-weight: bold;
}
.cell-head {
    display: flex;
    justify-content: space-between;
    align-items: center;
}
.filter {
    width: 20px;
    height: 20px;
    display: flex;
    align-items: center;
    justify-content: center;
    background: #fbfbfb;
    border: 1px solid #c3cbdc;
}
#grid td.editing {
    position: relative;
    padding-left: 3px;
    font-size: 18px;
    outline: 2px solid #227447;
    outline-offset: -1px;
}
.editing::after {
    content: "";
    position: absolute;
    right: -3px;
    bottom: -3px;
    width: 5px;
    height: 5px;
    background: #227447;
}
.corner {
    display: block;
    margin: 3px 3px 0 auto;
}
.ants {
    position: absolute;
    left: 34px;
    top: 22px;
    width: 294px;
    height: 300px;
    border: 2px dashed #2f7350;
}

.vscroll {
    width: 19px;
    margin: 0 0 0 2px;
    padding-top: 2px;
    display: flex;
    flex-direction: column;
    background: #dcdcdc;
}
.vscroll button, .hscroll button {
    display: flex;
    align-items: center;
    justify-content: center;
    background: #fff;
    border: 1px solid #777;
}
.vscroll button {
    height: 19px;
}
.vthumb {
    flex: 1;
    margin-bottom: 30px;
    background: #fff;
    border: 1px solid #777;
}

/* sheet tabs */
.sheetbar {
    flex: none;
    display: flex;
    align-items: center;
    height: 29px;
    padding: 0 25px 0 27px;
    border-bottom: 1px solid #c6c6c6;
}
.nav {
    margin-right: 23px;
}
.sheet-tab {
    align-self: flex-start;
    width: 82px;
    height: 26px;
    margin: 0 32px 0 18px;
    padding-bottom: 2px;
    background: #fff;
    border: 1px solid #aaa;
    border-top: none;
    border-bottom: 2px solid #227447;
    color: #227447;
    font-size: 17px;
    line-height: 22px;
}
.sheetbar .dots {
    margin: 0 15px 0 auto;
}
.hscroll {
    width: 729px;
    height: 19px;
    display: flex;
    background: #dcdcdc;
}
.hscroll button {
    width: 19px;
}
.hthumb {
    flex: 1;
    margin-right: 32px;
    background: #fff;
    border: 1px solid #777;
}

/* status bar */
.status {
    flex: none;
    display: flex;
    align-items: center;
    height: 27px;
    padding: 0 10px;
    background: #f4f4f4;
    color: #444;
}
.mode {
    margin-right: 39px;
}
.views {
    display: flex;
    gap: 33px;
    margin-left: auto;
}
.zoom {
    display: flex;
    align-items: center;
    gap: 6px;
    width: 158px;
    margin: 0 15px 0 23px;
    color: #a5a5a5;
    font-size: 17px;
    line-height: 20px;
}
.zoom input {
    flex: 1;
    min-width: 0;
    height: 9px;
    appearance: none;
    background: linear-gradient(#333, #333) center / 100% 1px no-repeat;
}
.zoom input::-webkit-slider-thumb {
    appearance: none;
    width: 1px;
    height: 9px;
    background: #333;
}
.percent {
    color: #a5a5a5;
    font-size: 16px;
}

/* taskbar */
.taskbar {
    flex: none;
    display: flex;
    align-items: center;
    height: 50px;
    background: #eee1d4;
    color: #111;
}
.start {
    width: 60px;
    display: flex;
    justify-content: center;
}
.search-box {
    width: 430px;
    height: 50px;
    display: flex;
    align-items: center;
    gap: 14px;
    padding-left: 15px;
    background: #fff;
    border: 1px solid #ccc4bc;
}
.search-box input {
    flex: 1;
    font-size: 19px;
}
.search-box input::placeholder {
    color: #333;
}
.sys {
    width: 60px;
    display: flex;
    justify-content: center;
}
.apps {
    flex: 1;
    display: flex;
    height: 50px;
    margin: 0 29px 0 4px;
}
.app {
    flex: 1;
    display: flex;
    align-items: center;
    justify-content: center;
}
.app.run {
    background: linear-gradient(#1873bd, #1873bd) center bottom / 49px 3px no-repeat;
}
.app.run.active {
    background: linear-gradient(#1873bd, #1873bd) center bottom / 100% 3px no-repeat #f9f5ee;
}
.logo {
    font: bold 15px "Liberation Sans", sans-serif;
    fill: #fff;
}
.tray {
    display: flex;
    align-items: center;
    width: 505px;
    padding-left: 10px;
}
.temp {
    width: 59px;
    padding-left: 12px;
    font-size: 17px;
}
.tray .up {
    margin: 0 14px 0 3px;
}
.tray .t {
    width: 20px;
    margin-right: 9px;
}
.ime {
    margin: 0 17px 0 3px;
    font-size: 19px;
    color: #777;
}
.clock {
    width: 88px;
    margin: 0 18px 0 14px;
    text-align: center;
    font-size: 16px;
    line-height: 23px;
}

/* dialog */
.dialog {
    position: absolute;
    left: 822px;
    top: 374px;
    width: 788px;
    height: 438px;
    display: flex;
    flex-direction: column;
    background: #f1f1f1;
    border: 1px solid #6b6b6b;
    box-shadow: 0 4px 14px rgba(0,0,0,0.35);
    color: #111;
    line-height: 20px;
}
.dialog-title {
    display: flex;
    align-items: center;
    height: 37px;
    padding: 0 24px 2px 9px;
    background: #fff;
}
.dialog-title .help {
    margin: 0 46px 0 auto;
}
.dialog-body {
    flex: 1;
    display: flex;
    flex-direction: column;
    padding: 10px 9px 11px 8px;
}
fieldset {
    margin: 0;
    padding: 10px 0 7px;
    border: 1px solid #dcdcdc;
    display: flex;
    flex-direction: column;
    gap: 5px;
}
legend {
    margin-left: 6px;
    padding: 0 1px;
}
.arg {
    display: grid;
    grid-template-columns: 181px 264px 9px 1fr;
    align-items: center;
    column-gap: 13px;
}
.arg label {
    text-align: right;
}
.field {
    position: relative;
    display: flex;
    height: 30px;
    background: #fff;
    border: 1px solid #ababab;
}
.field input {
    flex: 1;
    min-width: 0;
    padding: 0 0 3px 3px;
}
.field button {
    width: 26px;
    display: flex;
    align-items: center;
    justify-content: center;
    background: #fff;
    border: 2px solid #b4b4b4;
    box-shadow: inset 0 0 0 2px #e8e8e8;
}
.caret {
    position: absolute;
    left: 77px;
    top: 3px;
    width: 1px;
    height: 19px;
    background: #000;
}
.hint {
    color: #a5a5a5;
}
.total {
    margin-top: 7px;
    padding-left: 472px;
}
.desc {
    margin-top: 5px;
}
.arg-desc {
    display: flex;
    gap: 13px;
    height: 77px;
    margin-top: 19px;
    padding-left: 224px;
    border-bottom: 1px solid #dcdcdc;
}
.result {
    margin-top: 20px;
}
.dialog-foot {
    display: flex;
    align-items: center;
    gap: 13px;
    margin-top: auto;
}
.dialog-foot a {
    margin-right: auto;
    color: #21679b;
}
.dialog-foot button {
    width: 99px;
    height: 34px;
    background: #e2e2e2;
    border: 1px solid #adadad;
}
.dialog-foot .ok {
    border: 2px solid #2f6f9f;
}

.cursor {
    position: absolute;
    left: 1161px;
    top: 556px;
}

/* floating input method bar */
.ime-bar {
    position: absolute;
    right: 0;
    bottom: 130px;
    width: 176px;
    height: 32px;
    display: flex;
    align-items: center;
    justify-content: space-between;
    padding: 0 6px 0 30px;
    background: #fff;
    border: 1px solid #dedede;
    border-right: none;
    color: #1369b8;
    font-size: 18px;
    font-weight: bold;
}
.ime-logo {
    position: absolute;
    left: -17px;
    top: -7px;
}
```
FILE: grid.js
```js
const cols = 'ABCDEFGHIJKLMNOPQRSTUVW'.split('');
const data = [
    ['十二生肖', '十二星座', '十二时辰'],
    ['子（鼠）', '白羊座', '夜半'],
    ['丑（牛）', '金牛座', '鸡鸣'],
    ['寅（虎）', '双子座', '平旦'],
    ['卯（兔）', '巨蟹座', '日出'],
    ['辰（龙）', '狮子座', '食时'],
    ['巳（蛇）', '处女座', '隅中'],
    ['午（马）', '天秤座', '日中'],
    ['未（羊）', '天蝎座', '日昳'],
    ['申（猴）', '人马座', '晡时'],
    ['酉（鸡）', '摩羯座', '日入'],
    ['戌（狗）', '宝瓶座', '黄昏'],
    ['亥（猪）', '双鱼座', '人定']
];
const arrow = '<svg width="8" height="5" fill="#555"><path d="M0 0h8L4 5z"/></svg>';

let html = '<colgroup><col style="width:34px">';
cols.forEach((c, i) => {
    html += `<col style="width:${i < 3 ? 98 : 80}px">`;
});
html += '</colgroup><thead><tr><th><svg class="corner" width="15" height="15" fill="#b5b5b5"><path d="M15 0v15H0z"/></svg></th>';
cols.forEach(c => {
    html += `<th class="${c === 'G' ? 'sel' : ''}">${c}</th>`;
});
html += '</tr></thead><tbody>';

for (let r = 1; r <= 29; r++) {
    html += `<tr class="${r > 1 && r % 2 === 0 && r <= 13 ? 'band' : ''}"><th class="${r === 6 ? 'sel' : ''}">${r}</th>`;
    cols.forEach((c, i) => {
        const text = data[r - 1] && data[r - 1][i];
        if (r === 1 && text) {
            html += `<td class="data head"><div class="cell-head">${text}<button class="filter" aria-label="筛选">${arrow}</button></div></td>`;
        } else if (text) {
            html += `<td class="data ${r === 2 && i === 0 ? 'typing' : ''}">${text}</td>`;
        } else if (r === 6 && c === 'G') {
            html += '<td class="editing">部])</td>';
        } else {
            html += '<td></td>';
        }
    });
    html += '</tr>';
}
document.getElementById('grid').innerHTML = html + '</tbody>';
```
